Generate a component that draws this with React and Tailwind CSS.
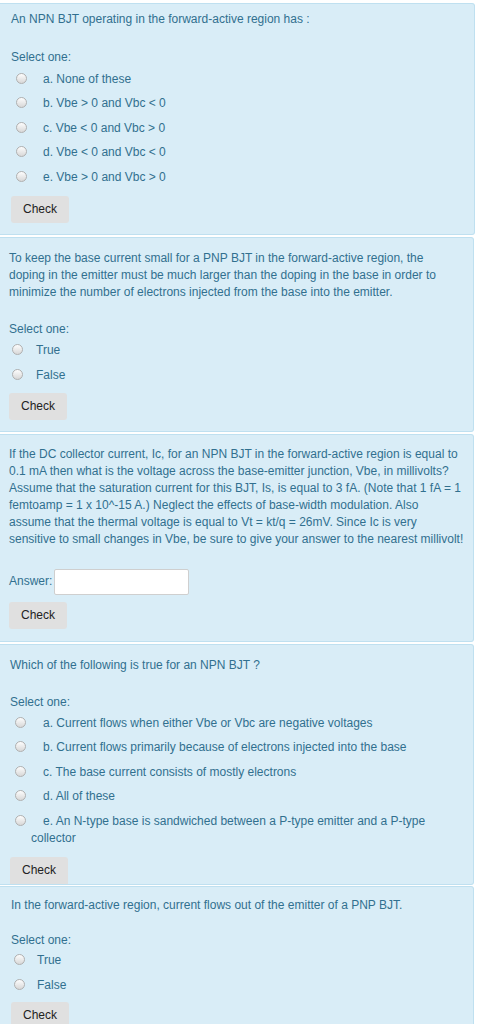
import React from 'react';

const Radio = () => (
  <span className="inline-block w-[11px] h-[11px] rounded-full border border-[#b0b0b0] bg-linear-to-b from-[#fdfdfd] to-[#d8d8d8] align-[-1px] indent-0" />
);

const CheckButton = ({ className = '' }) => (
  <button className={`block w-[58px] h-[27px] rounded-[3px] bg-[#e0e0e0] text-[12px] text-[#222] ${className}`}>
    Check
  </button>
);

const Lines = ({ lines }) => (
  <div>
    {lines.map((l, i) => (
      <div key={i} className="whitespace-nowrap">{l}</div>
    ))}
  </div>
);

// option rows: radio then label, wrapped text hangs under the radio
// x values are page coordinates, pl is the panel's left padding
const Options = ({ items, pl, radioX, textX, wrapX, className = '' }) => (
  <div className={className}>
    {items.map((it, i) => (
      <div
        key={i}
        className="py-[3.75px]"
        style={{ paddingLeft: wrapX - pl, textIndent: radioX - wrapX }}
      >
        <Radio />
        <span style={{ marginLeft: textX - radioX - 11 }}>{it}</span>
      </div>
    ))}
  </div>
);

const Panel = ({ children, className = '' }) => (
  <div className={`bg-[#d9edf7] border-y border-r border-[#bfe0f0] rounded-r-[3px] ${className}`}>
    {children}
  </div>
);

export default function App() {
  return (
    <div
      className="bg-white w-[479px] h-[1024px] overflow-hidden pt-[3px] text-[12px] leading-[17px] text-[#31708f]"
      style={{ fontFamily: '"Liberation Sans", Arial, sans-serif' }}
    >
      <Panel className="w-[475px] pt-[7px] pb-[11px] pl-[11px]">
        <div>An NPN BJT operating in the forward-active region has :</div>
        <div className="mt-[21px]">Select one:</div>
        <Options
          className="mt-[1px]"
          pl={11}
          radioX={16}
          textX={43}
          wrapX={31}
          items={[
            'a. None of these',
            'b. Vbe > 0 and Vbc < 0',
            'c. Vbe < 0 and Vbc > 0',
            'd. Vbe < 0 and Vbc < 0',
            'e. Vbe > 0 and Vbc > 0',
          ]}
        />
        <CheckButton className="mt-[6px]" />
      </Panel>

      <Panel className="w-[474px] mt-[2px] pt-[12px] pb-[11px] pl-[9px]">
        <Lines
          lines={[
            'To keep the base current small for a PNP BJT in the forward-active region, the',
            'doping in the emitter must be much larger than the doping in the base in order to',
            'minimize the number of electrons injected from the base into the emitter.',
          ]}
        />
        <div className="mt-[20px]">Select one:</div>
        <Options className="mt-[1px]" pl={9} radioX={12} textX={36} wrapX={24} items={['True', 'False']} />
        <CheckButton className="mt-[5px]" />
      </Panel>

      <Panel className="w-[474px] mt-[2px] pt-[11px] pb-[12px] pl-[9px]">
        <Lines
          lines={[
            'If the DC collector current, Ic, for an NPN BJT in the forward-active region is equal to',
            '0.1 mA then what is the voltage across the base-emitter junction, Vbe, in millivolts?',
            'Assume that the saturation current for this BJT, Is, is equal to 3 fA. (Note that 1 fA = 1',
            'femtoamp = 1 x 10^-15 A.) Neglect the effects of base-width modulation. Also',
            'assume that the thermal voltage is equal to Vt = kt/q = 26mV. Since Ic is very',
            'sensitive to small changes in Vbe, be sure to give your answer to the nearest millivolt!',
          ]}
        />
        <div className="mt-[21px] flex items-center gap-[2px]">
          <span>Answer:</span>
          <input className="w-[135px] h-[26px] bg-white border border-[#cfcfcf] rounded-[2px] outline-none" />
        </div>
        <CheckButton className="mt-[7px]" />
      </Panel>

      <Panel className="w-[474px] mt-[2px] pt-[12.5px] pl-[10px]">
        <div>Which of the following is true for an NPN BJT ?</div>
        <div className="mt-[20px]">Select one:</div>
        <Options
          pl={10}
          radioX={15}
          textX={43}
          wrapX={31}
          items={[
            'a. Current flows when either Vbe or Vbc are negative voltages',
            'b. Current flows primarily because of electrons injected into the base',
            'c. The base current consists of mostly electrons',
            'd. All of these',
            <>e. An N-type base is sandwiched between a P-type emitter and a P-type<br />collector</>,
          ]}
        />
        <CheckButton className="mt-[6px] rounded-b-none" />
      </Panel>

      <Panel className="w-[474px] mt-[1px] pt-[10px] pb-[11px] pl-[11px]">
        <div>In the forward-active region, current flows out of the emitter of a PNP BJT.</div>
        <div className="mt-[18px]">Select one:</div>
        <Options pl={11} radioX={14} textX={37} wrapX={26} items={['True', 'False']} />
        <CheckButton className="mt-[4px]" />
      </Panel>
    </div>
  );
}
